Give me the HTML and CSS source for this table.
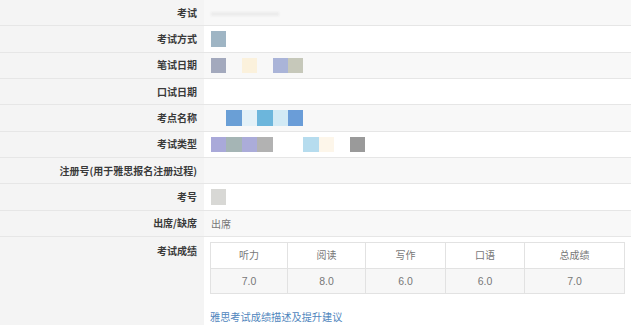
FILE: index.html
```html
<!DOCTYPE html>
<html lang="zh">
<head>
<meta charset="utf-8">
<title>考试信息</title>
<link rel="stylesheet" href="styles.css">
</head>
<body>
<div class="info">
  <div class="row odd">
    <div class="label">考试</div>
    <div class="value"><span class="faint"></span></div>
  </div>
  <div class="row">
    <div class="label">考试方式</div>
    <div class="value"><div class="mosaic"><i class="c1"></i></div></div>
  </div>
  <div class="row odd">
    <div class="label">笔试日期</div>
    <div class="value"><div class="mosaic"><i class="c2"></i><i></i><i class="c3"></i><i></i><i class="c4"></i><i class="c5"></i></div></div>
  </div>
  <div class="row">
    <div class="label">口试日期</div>
    <div class="value"></div>
  </div>
  <div class="row odd">
    <div class="label">考点名称</div>
    <div class="value"><div class="mosaic"><i></i><i class="c6"></i><i class="c7"></i><i class="c8"></i><i class="c9"></i><i class="c10"></i></div></div>
  </div>
  <div class="row">
    <div class="label">考试类型</div>
    <div class="value"><div class="mosaic"><i class="c11"></i><i class="c12"></i><i class="c13"></i><i class="c14"></i><i></i><i></i><i class="c15"></i><i class="c16"></i><i></i><i class="c17"></i></div></div>
  </div>
  <div class="row odd">
    <div class="label">注册号(用于雅思报名注册过程)</div>
    <div class="value"></div>
  </div>
  <div class="row">
    <div class="label">考号</div>
    <div class="value"><div class="mosaic"><i class="c18"></i></div></div>
  </div>
  <div class="row odd">
    <div class="label">出席/缺席</div>
    <div class="value text">出席</div>
  </div>
  <div class="row last">
    <div class="label">考试成绩</div>
    <div class="value">
      <table class="scores">
        <thead>
          <tr><th class="w1">听力</th><th class="w2">阅读</th><th class="w3">写作</th><th class="w4">口语</th><th>总成绩</th></tr>
        </thead>
        <tbody>
          <tr><td>7.0</td><td>8.0</td><td>6.0</td><td>6.0</td><td>7.0</td></tr>
        </tbody>
      </table>
      <a class="link" href="#">雅思考试成绩描述及提升建议</a>
    </div>
  </div>
</div>
</body>
</html>
```

FILE: styles.css
```css
html, body {
  margin: 0;
  padding: 0;
  background: #ffffff;
}
body {
  font-family: "Noto Sans CJK SC", "Liberation Sans", sans-serif;
  font-size: 10px;
  color: #333;
  overflow: hidden;
}
.info {
  display: flex;
  flex-direction: column;
  height: 325px;
}
.row {
  display: grid;
  grid-template-columns: 204px 1fr;
  height: 26.33px;
  box-sizing: border-box;
  border-bottom: 1px solid #e6e6e6;
  align-items: stretch;
}
.label {
  background: #f4f4f4;
  text-align: right;
  padding-right: 7px;
  font-weight: bold;
  color: #3a3a3a;
  display: flex;
  align-items: center;
  justify-content: flex-end;
  line-height: 16px;
  white-space: nowrap;
}
.value {
  display: flex;
  align-items: center;
  padding-left: 7px;
  background: #ffffff;
}
.row.odd .value {
  background: #f8f8f8;
}
.value.text {
  color: #777;
}
.faint {
  display: block;
  width: 68px;
  height: 4px;
  margin-top: 3px;
  background: #ebebeb;
  filter: blur(1.2px);
}
.mosaic {
  display: flex;
}
.mosaic i {
  display: block;
  width: 15.4px;
  height: 15.3px;
  filter: blur(0.4px);
}
.c1 { background: #9fb5c4; }
.c2 { background: #a3a9bd; }
.c3 { background: #fbf1dc; }
.c4 { background: #aab4d8; }
.c5 { background: #c6c8ba; }
.c6 { background: #6a9fd6; }
.c7 { background: #e3f1f8; }
.c8 { background: #6cb6dc; }
.c9 { background: #d2eaf5; }
.c10 { background: #6a9dd8; }
.c11 { background: #a9a9d9; }
.c12 { background: #a5b5b5; }
.c13 { background: #abacd9; }
.c14 { background: #b2b2b2; }
.c15 { background: #b6dcee; }
.c16 { background: #fdf6ea; }
.c17 { background: #9a9a9a; }
.c18 { background: #d8d8d5; }

.row.last {
  flex: 1;
  height: auto;
  border-bottom: none;
}
.row.last .label {
  align-items: flex-start;
  padding-top: 6px;
}
.row.last .value {
  flex-direction: column;
  align-items: flex-start;
  padding-left: 6px;
  padding-top: 5px;
  padding-right: 6px;
}
.scores {
  border-collapse: collapse;
  width: 415px;
  table-layout: fixed;
  color: #777;
}
.scores th, .scores td {
  border: 1px solid #e2e2e2;
  text-align: center;
  font-weight: normal;
  padding: 0;
  line-height: 14px;
}
.scores th {
  height: 25px;
  background: #ffffff;
}
.scores td {
  height: 24.5px;
  background: #f7f7f7;
  font-family: "Liberation Sans", sans-serif;
  font-size: 10.5px;
}
.scores .w1 { width: 76px; }
.scores .w2 { width: 77px; }
.scores .w3 { width: 79px; }
.scores .w4 { width: 78px; }
.link {
  margin-top: 16px;
  color: #4f86bd;
  text-decoration: none;
  font-size: 10.2px;
  line-height: 14px;
}
```
